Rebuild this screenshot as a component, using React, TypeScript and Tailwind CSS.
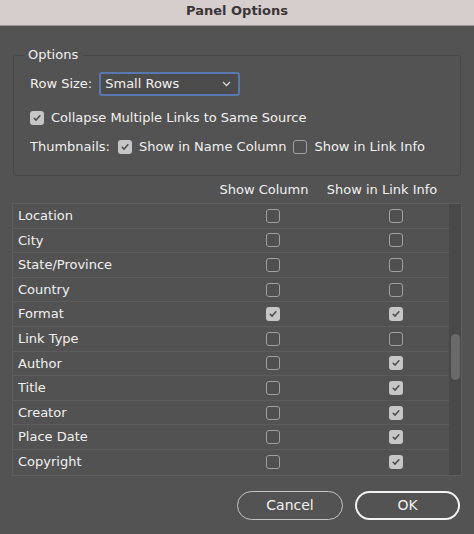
import React from "react";

const rows: [string, boolean, boolean][] = [
  ["Location", false, false],
  ["City", false, false],
  ["State/Province", false, false],
  ["Country", false, false],
  ["Format", true, true],
  ["Link Type", false, false],
  ["Author", false, true],
  ["Title", false, true],
  ["Creator", false, true],
  ["Place Date", false, true],
  ["Copyright", false, true],
];

function Box({ checked }: { checked: boolean }) {
  if (checked) {
    return (
      <span className="flex h-[14px] w-[14px] shrink-0 items-center justify-center rounded-[3px] bg-[#c6c6c6]">
        <svg width="10" height="10" viewBox="0 0 10 10">
          <path d="M2.2 5.2 L4.1 7.1 L7.9 2.8" fill="none" stroke="#4a4a4a" strokeWidth="1.5" strokeLinecap="round" strokeLinejoin="round" />
        </svg>
      </span>
    );
  }
  return <span className="block h-[14px] w-[14px] shrink-0 rounded-[3px] border border-[#a0a0a0] bg-[#505050]" />;
}

export default function App() {
  return (
    <div
      className="flex h-[534px] w-[474px] flex-col bg-[#535353] text-[13px] text-[#f1f1f1]"
      style={{ fontFamily: '"DejaVu Sans", "Noto Sans", sans-serif' }}
    >
      <div className="flex h-[26px] shrink-0 items-center justify-center border-b border-[#9c9595] bg-[#d6cdcd] pb-[3px] text-[13px] font-bold text-[#3b3535]">
        Panel Options
      </div>

      <fieldset className="mx-[13px] mt-[20px] rounded-[3px] border border-[#484848] pb-[16px] pl-[16px]">
        <legend className="ml-[-6px] px-[4px] leading-[18px]">Options</legend>
        <div className="mt-[8px] flex h-[24px] items-center">
          <span>Row Size:</span>
          <div className="ml-[7px] flex h-[24px] w-[141px] items-center justify-between rounded-[3px] border-2 border-[#5a78b0] bg-[#4c4c4c] pl-[4px] pr-[7px]">
            <span>Small Rows</span>
            <svg width="9" height="6" viewBox="0 0 9 6">
              <path d="M1 1 L4.5 4.5 L8 1" fill="none" stroke="#d8d8d8" strokeWidth="1.3" />
            </svg>
          </div>
        </div>
        <div className="mt-[10px] flex h-[24px] items-center gap-[7px]">
          <Box checked={true} />
          <span>Collapse Multiple Links to Same Source</span>
        </div>
        <div className="mt-[5px] flex h-[24px] items-center">
          <span>Thumbnails:</span>
          <span className="ml-[8px]"><Box checked={true} /></span>
          <span className="ml-[7px]">Show in Name Column</span>
          <span className="ml-[7px]"><Box checked={false} /></span>
          <span className="ml-[7px]">Show in Link Info</span>
        </div>
      </fieldset>

      <div className="flex h-[27px] shrink-0 items-center pl-[206px] pt-[1px]">
        <span className="w-[116px] text-center">Show Column</span>
        <span className="ml-[2px] w-[116px] text-center">Show in Link Info</span>
      </div>

      <div className="mx-[12px] flex border border-[#5d5d5d] bg-[#525252]">
        <div className="flex-1">
          {rows.map(([name, a, b], i) => (
            <div
              key={name}
              className={`flex h-[24.6px] items-center ${i < rows.length - 1 ? "border-b border-[#5c5c5c]" : ""}`}
            >
              <span className="w-[253px] pl-[5px]">{name}</span>
              <Box checked={a} />
              <span className="w-[109px]" />
              <Box checked={b} />
            </div>
          ))}
        </div>
        <div className="flex w-[12px] flex-col bg-[#494949] pt-[130px]">
          <div className="mx-auto h-[46px] w-[9px] rounded-full bg-[#6a6a6a]" />
        </div>
      </div>

      <div className="mt-[15px] flex justify-end gap-[12px] pr-[14px]">
        <button className="h-[29px] w-[106px] rounded-full border-[1.5px] border-[#c4c4c4] text-[14px] text-[#f1f1f1]">
          Cancel
        </button>
        <button className="h-[29px] w-[105px] rounded-full border-2 border-[#f2f2f2] text-[14px] text-[#f1f1f1]">
          OK
        </button>
      </div>
    </div>
  );
}
